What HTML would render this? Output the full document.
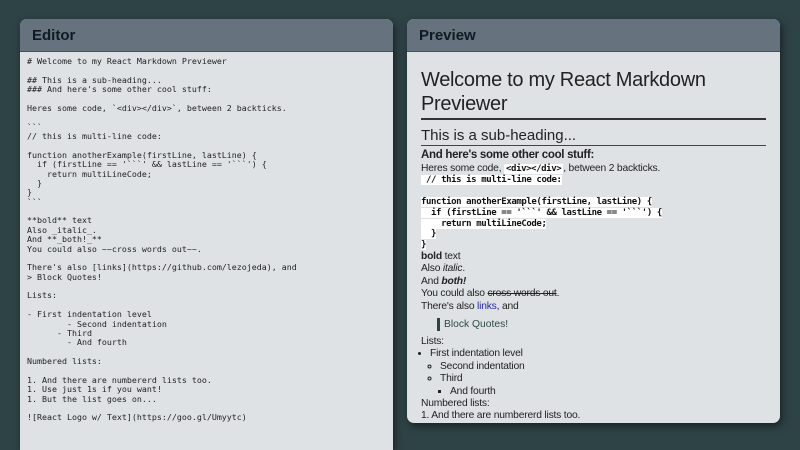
<!DOCTYPE html>
<html><head><meta charset="utf-8"><style>
*{box-sizing:border-box;margin:0;padding:0}
body{width:800px;height:450px;background:#2e4346;position:relative;overflow:hidden;font-family:"Liberation Sans",sans-serif}
.panel{position:absolute;background:#dfe2e5;border-radius:7px;overflow:hidden;box-shadow:2px 3px 8px rgba(0,0,0,.5)}
.hd{height:33px;background:#66737e;color:#111a22;font-weight:bold;font-size:15px;padding:8px 12px;border-bottom:1px solid #444f58}
#ed{left:20px;top:19px;width:373px;height:431px;border-radius:7px 7px 0 0}
#pv{left:407px;top:19px;width:373px;height:404px}
pre.src{font-family:"DejaVu Sans Mono","Liberation Mono",monospace;font-size:8.3px;line-height:9.38px;color:#222;padding:5px 7px;white-space:pre}
.c{padding:0 14px;color:#222}
h1{font-weight:normal;font-size:20px;line-height:24px;padding-top:16px;padding-bottom:2px;border-bottom:2px solid #333;letter-spacing:-.3px}
h2{font-weight:normal;font-size:15px;line-height:19px;border-bottom:1px solid #444;margin-top:6px}
h3{font-size:11.5px;line-height:15px;margin-top:2px;letter-spacing:-.3px}
p,li{font-size:10.3px;line-height:12.4px;letter-spacing:-.2px}
code{font-family:"DejaVu Sans Mono",monospace;font-size:9px;letter-spacing:-.4px;background:#fff;padding:0 2px;font-weight:bold;color:#111}
pre.cb{font-family:"DejaVu Sans Mono",monospace;font-size:9px;letter-spacing:-.4px;line-height:10.8px;font-weight:bold;color:#111}
pre.cb span{background:#fff}
blockquote{margin:5px 0 5px 16px;border-left:3px solid #2e4346;padding-left:4px;color:#2e4a4a;font-size:10.3px;line-height:13px}
ul{padding-left:9px;margin:0}
ul ul{padding-left:10px;list-style:circle}
ul ul ul{list-style:square}
a{color:#2a2aa8}
</style></head><body>
<div class="panel" id="ed"><div class="hd">Editor</div>
<pre class="src"># Welcome to my React Markdown Previewer

## This is a sub-heading...
### And here's some other cool stuff:

Heres some code, &#96;&lt;div&gt;&lt;/div&gt;&#96;, between 2 backticks.

&#96;&#96;&#96;
// this is multi-line code:

function anotherExample(firstLine, lastLine) {
  if (firstLine == '&#96;&#96;&#96;' &amp;&amp; lastLine == '&#96;&#96;&#96;') {
    return multiLineCode;
  }
}
&#96;&#96;&#96;

**bold** text
Also _italic_.
And **_both!_**
You could also ~~cross words out~~.

There's also [links](https://github.com/lezojeda), and
&gt; Block Quotes!

Lists:

- First indentation level
        - Second indentation
      - Third
        - And fourth

Numbered lists:

1. And there are numbererd lists too.
1. Use just 1s if you want!
1. But the list goes on...

![React Logo w/ Text](https://goo.gl/Umyytc)</pre></div>
<div class="panel" id="pv"><div class="hd">Preview</div>
<div class="c">
<h1>Welcome to my React Markdown Previewer</h1>
<h2>This is a sub-heading...</h2>
<h3>And here's some other cool stuff:</h3>
<p>Heres some code, <code>&lt;div&gt;&lt;/div&gt;</code>, between 2 backticks.</p>
<pre class="cb"><span> // this is multi-line code:</span>

<span>function anotherExample(firstLine, lastLine) {</span>
<span>  if (firstLine == '&#96;&#96;&#96;' &amp;&amp; lastLine == '&#96;&#96;&#96;') {</span>
<span>    return multiLineCode;</span>
<span>  }</span>
<span>}</span></pre>
<p><b>bold</b> text</p>
<p>Also <i>italic</i>.</p>
<p>And <b><i>both!</i></b></p>
<p>You could also <s>cross words out</s>.</p>
<p>There's also <a>links</a>, and</p>
<blockquote>Block Quotes!</blockquote>
<p>Lists:</p>
<ul><li>First indentation level<ul><li>Second indentation</li><li>Third<ul><li>And fourth</li></ul></li></ul></li></ul>
<p>Numbered lists:</p>
<p>1. And there are numbererd lists too.</p>
</div></div>
</body></html>
